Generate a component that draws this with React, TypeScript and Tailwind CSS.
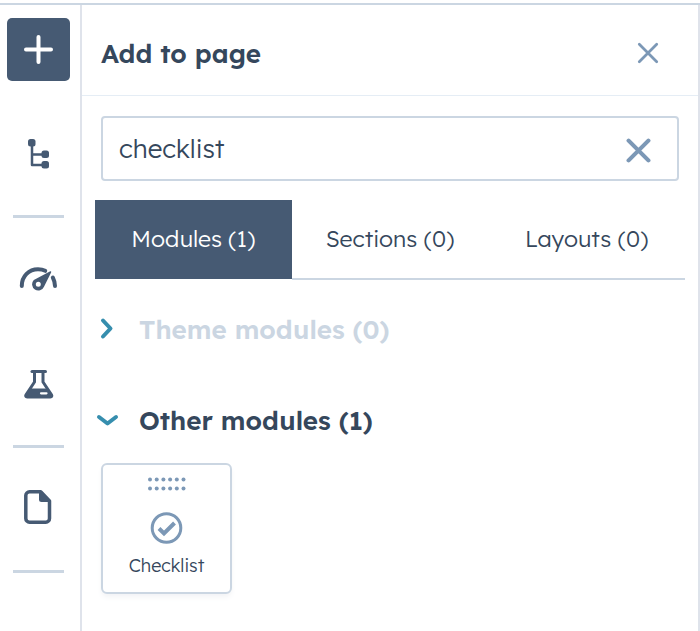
import { useState, type ReactNode } from 'react'

const TABS = ['Modules (1)', 'Sections (0)', 'Layouts (0)']

function RailButton({ label, children }: { label: string; children: ReactNode }) {
  return (
    <button type="button" aria-label={label} className="flex h-[60px] w-full items-center justify-center text-[#465a73]">
      {children}
    </button>
  )
}

function RailDivider() {
  return <hr className="h-[3px] w-[51px] border-0 bg-[#cbd6e2]" />
}

function CloseIcon({ size, stroke }: { size: number; stroke: number }) {
  return (
    <svg width={size} height={size} viewBox="0 0 24 24" fill="none" stroke="currentColor" strokeWidth={stroke} strokeLinecap="round">
      <path d="M2.5 2.5 21.5 21.5M21.5 2.5 2.5 21.5" />
    </svg>
  )
}

function TreeIcon() {
  return (
    <svg width="22" height="30" viewBox="0 0 22 30" fill="currentColor">
      <path d="M4 4v22h14M4 15.500h14" fill="none" stroke="currentColor" strokeWidth="2.5" strokeLinejoin="round" />
      <rect x="0" y="0" width="7.5" height="7.5" rx="2.5" />
      <rect x="13.5" y="11.5" width="7.5" height="7.5" rx="2.5" />
      <rect x="13.5" y="22" width="7.5" height="7.5" rx="2.5" />
    </svg>
  )
}

function GaugeIcon() {
  return (
    <svg width="40" height="24" viewBox="0 0 40 24" fill="none" stroke="currentColor" strokeWidth="4" strokeLinecap="round">
      <path d="M2.8 19C2.8 9 10 2.300 19 2.300c2.800 0 5.200.5 7.200 1.500" />
      <path d="M33.800 10.500c1.400 2.600 2.100 5.400 2.200 8.500" />
      <path
        d="M30.800 4.500c.9-.8 1.800-.2 1.300.9L25 19.800a6.200 6.200 0 1 1-10.200-6.700zM19.300 14.800a2.500 2.500 0 1 0 0 5 2.500 2.500 0 0 0 0-5z"
        fill="currentColor"
        fillRule="evenodd"
        stroke="none"
      />
    </svg>
  )
}

function FlaskIcon() {
  return (
    <svg width="32" height="30" viewBox="0 0 32 30" fill="none" stroke="currentColor" strokeWidth="3" strokeLinecap="round" strokeLinejoin="round">
      <path d="M9 2.500h13.500" />
      <path d="M11.500 3v10L3 25.800c-.7 1.200-.2 2.200 1.100 2.200h23.300c1.300 0 1.800-1 1.100-2.200L20 13V3" />
      <path d="M7 20h17.500L28 27H3.500z" fill="currentColor" strokeWidth="1" />
      <path d="M18 24.300h5.500" stroke="white" strokeWidth="2.200" />
    </svg>
  )
}

function PageIcon() {
  return (
    <svg width="30" height="34" viewBox="0 0 30 34" fill="none" stroke="currentColor" strokeWidth="3.500" strokeLinejoin="round">
      <path d="M5.500 1.800h11.200l8.800 9.200v17.500a3.700 3.700 0 0 1-3.700 3.700h-16.300a3.700 3.700 0 0 1-3.700-3.700v-23a3.700 3.700 0 0 1 3.700-3.700z" />
      <path d="M15 1h2.500L26.500 10.500V12H17.500a2.500 2.500 0 0 1-2.500-2.500z" fill="currentColor" stroke="none" />
    </svg>
  )
}

function ModuleGroup({ title, open = false, children }: { title: string; open?: boolean; children?: ReactNode }) {
  return (
    <section>
      <h2>
        <button
          type="button"
          aria-expanded={open}
          className={`flex h-10 w-full items-center text-left text-[26px] font-semibold ${open ? 'text-[#35475c]' : 'text-[#cbd6e2]'}`}
        >
          <span className="flex w-[44px] shrink-0 text-[#368eae]">
            <svg
              width="24"
              height="24"
              viewBox="0 0 24 24"
              fill="none"
              stroke="currentColor"
              strokeWidth="4"
              strokeLinecap="round"
              strokeLinejoin="round"
            >
              {open ? <path d="M4 9l8.500 6.500L21 9" /> : <path d="M8 3.500l7.500 8L8 19.500" />}
            </svg>
          </span>
          {title}
        </button>
      </h2>
      {children}
    </section>
  )
}

function ModuleCard({ name }: { name: string }) {
  return (
    <button
      type="button"
      className="flex h-[131px] w-[131px] flex-col items-center rounded-md border-2 border-[#cbd6e2] bg-white pt-[11px] text-[#7c98b6] shadow-md shadow-gray-100"
    >
      <svg width="40" height="16" viewBox="0 0 40 16" fill="currentColor">
        {[3.5, 12.5].map((y) => [3, 9.7, 16.4, 23.1, 29.8, 36.5].map((x) => <circle key={`${x}-${y}`} cx={x} cy={y} r="2" />))}
      </svg>
      <svg className="mt-5" width="34" height="32" viewBox="0 0 34 32" fill="none" stroke="currentColor" strokeWidth="3">
        <circle cx="16.5" cy="16" r="14.3" />
        <path d="M9 16.500l5 5L24.500 11" strokeWidth="4" />
      </svg>
      <span className="mt-2.5 text-lg leading-6 font-light text-[#35475c]">{name}</span>
    </button>
  )
}

export default function App() {
  const [query, setQuery] = useState('checklist')
  const [tab, setTab] = useState(TABS[0])

  return (
    <div className="flex min-h-screen flex-col bg-white pt-[3px] font-['Lexend_Deca','Lexend',Inter,sans-serif] text-[#35475c]">
      <div className="flex grow border-t-2 border-[#cbd6e2]">
        <nav aria-label="Editor tools" className="flex w-[82px] shrink-0 flex-col items-center border-r-2 border-[#dfe3eb] pt-[13px] pr-[10px] pl-[7px]">
          <button
            type="button"
            aria-label="Add"
            className="mb-[43px] flex h-[63px] w-full items-center justify-center rounded-[5px] bg-[#465a73] text-white"
          >
            <svg width="30" height="30" viewBox="0 0 30 30" fill="none" stroke="currentColor" strokeWidth="4" strokeLinecap="round">
              <path d="M14.500 2v25M2 14.500h25" />
            </svg>
          </button>
          <RailButton label="Contents"><TreeIcon /></RailButton>
          <div className="my-[31px]"><RailDivider /></div>
          <RailButton label="Optimize"><GaugeIcon /></RailButton>
          <div className="h-[45px]" />
          <RailButton label="Test"><FlaskIcon /></RailButton>
          <div className="mt-[31px] mb-[29px]"><RailDivider /></div>
          <RailButton label="Page"><PageIcon /></RailButton>
          <div className="mt-[33px]"><RailDivider /></div>
        </nav>

        <main className="min-w-0 grow border-r-2 border-[#dfe3eb]">
          <header className="flex h-[91px] items-center justify-between border-b border-[#e5edf5] pt-[6px] pr-[38px] pl-[19px]">
            <h1 className="text-[26px] font-semibold">Add to page</h1>
            <button type="button" aria-label="Close" className="p-px text-[#7c98b6]">
              <CloseIcon size={22} stroke={3} />
            </button>
          </header>

          <div className="mx-[19px] mt-5 flex h-[65px] items-center rounded-[4px] border-2 border-[#cbd6e2] pr-[26px]">
            <input
              type="text"
              aria-label="Search modules"
              value={query}
              onChange={(event) => setQuery(event.target.value)}
              className="h-full min-w-0 grow bg-transparent pl-4 text-[26px] font-light outline-none"
            />
            <button type="button" aria-label="Clear search" onClick={() => setQuery('')} className="pt-1 text-[#7c98b6]">
              <CloseIcon size={25} stroke={4} />
            </button>
          </div>

          <div role="tablist" className="mx-[13px] mt-[19px] grid h-[80px] grid-cols-3">
            {TABS.map((name) => (
              <button
                key={name}
                type="button"
                role="tab"
                aria-selected={tab === name}
                onClick={() => setTab(name)}
                className={`text-[23px] font-light ${tab === name ? 'mb-px bg-[#465a73] text-white' : 'border-b-2 border-[#cbd6e2]'}`}
              >
                {name}
              </button>
            ))}
          </div>

          <div className="mx-[13px] mt-[29px] grid gap-[51px]">
            <ModuleGroup title="Theme modules (0)" />
            <ModuleGroup title="Other modules (1)" open>
              <div className="mt-[23px] pl-1.5">
                <ModuleCard name="Checklist" />
              </div>
            </ModuleGroup>
          </div>
        </main>
      </div>
    </div>
  )
}
